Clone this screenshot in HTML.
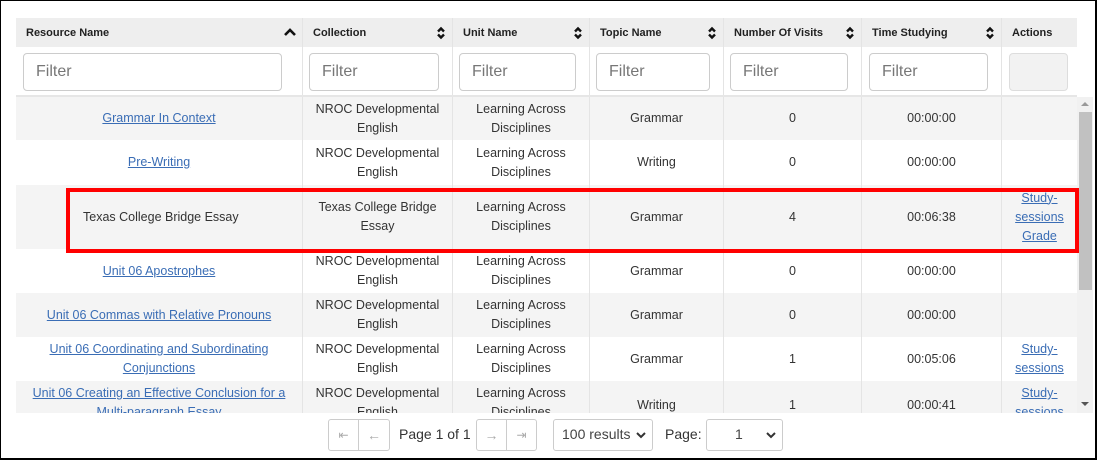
<!DOCTYPE html>
<html><head><style>
*{box-sizing:border-box;margin:0;padding:0}
body{width:1097px;height:460px;background:#fff;font-family:"Liberation Sans",sans-serif;color:#333;position:relative;overflow:hidden}
.frame{position:absolute;left:0;top:0;width:1097px;height:460px;border:1px solid #000;border-right:2px solid #000;border-bottom:2px solid #000}
.hdr{position:absolute;left:16px;top:18px;width:1061px;height:29px;background:#eee;display:flex}
.fil{position:absolute;left:16px;top:47px;width:1061px;height:50px;display:flex;border-bottom:2px solid #e6e6e6}
.c{position:relative;border-right:1px solid #e4e4e4}
.c:last-child{border-right:none}
.hdr .c{font-weight:bold;font-size:11px;color:#222;padding:9px 0 0 10px}
.sort{position:absolute;right:6px;top:8px}
.fil input{position:absolute;top:6px;left:6px;right:13px;height:38px;border:1px solid #ccc;border-radius:4px;font:16px "Liberation Sans",sans-serif;color:#777;padding-left:12px;background:#fff}
.body{position:absolute;left:16px;top:97px;width:1061px;height:316px;overflow:hidden}
.row{display:flex;font-size:12.5px;line-height:19px}
.row .c{display:flex;align-items:center;justify-content:center;text-align:center}
.g{background:#f4f4f4}
a{color:#3a6db5;text-decoration:underline}
.w1{width:287px}.w2{width:150px}.w3{width:137px}.w4{width:134px}.w5{width:138px}.w6{width:140px}.w7{width:75px}
.sb{position:absolute;left:1077px;top:97px;width:16px;height:316px;background:#f1f1f1}
.thumb{position:absolute;left:1079px;top:112px;width:13px;height:178px;background:#c1c1c1}
.red{position:absolute;left:66px;top:188px;width:1013px;height:65px;border:4px solid #f00}
.pag{position:absolute;top:419px;height:32px;border:1px solid #ccc;border-radius:3px;background:#fff;font-size:14px;color:#aaa}
</style></head><body>
<div class="frame"></div>
<div class="hdr">
<div class="c w1">Resource Name<svg class="sort" width="12" height="12" viewBox="0 0 12 12"><path d="M1 9 L6 4 L11 9" stroke="#111" stroke-width="2.6" fill="none"/></svg></div>
<div class="c w2">Collection<svg class="sort" width="10" height="14" viewBox="0 0 10 14"><path d="M2 5.5 L5 2.5 L8 5.5M2 8.5 L5 11.5 L8 8.5" stroke="#111" stroke-width="2.4" fill="none"/></svg></div>
<div class="c w3">Unit Name<svg class="sort" width="10" height="14" viewBox="0 0 10 14"><path d="M2 5.5 L5 2.5 L8 5.5M2 8.5 L5 11.5 L8 8.5" stroke="#111" stroke-width="2.4" fill="none"/></svg></div>
<div class="c w4">Topic Name<svg class="sort" width="10" height="14" viewBox="0 0 10 14"><path d="M2 5.5 L5 2.5 L8 5.5M2 8.5 L5 11.5 L8 8.5" stroke="#111" stroke-width="2.4" fill="none"/></svg></div>
<div class="c w5">Number Of Visits<svg class="sort" width="10" height="14" viewBox="0 0 10 14"><path d="M2 5.5 L5 2.5 L8 5.5M2 8.5 L5 11.5 L8 8.5" stroke="#111" stroke-width="2.4" fill="none"/></svg></div>
<div class="c w6">Time Studying<svg class="sort" width="10" height="14" viewBox="0 0 10 14"><path d="M2 5.5 L5 2.5 L8 5.5M2 8.5 L5 11.5 L8 8.5" stroke="#111" stroke-width="2.4" fill="none"/></svg></div>
<div class="c w7">Actions</div>
</div>
<div class="fil">
<div class="c w1"><input value="Filter" style="left:7px;right:20px"></div>
<div class="c w2"><input value="Filter"></div>
<div class="c w3"><input value="Filter"></div>
<div class="c w4"><input value="Filter"></div>
<div class="c w5"><input value="Filter"></div>
<div class="c w6"><input value="Filter" style="left:7px"></div>
<div class="c w7"><input value="" style="left:7px;right:9px;background:#f2f2f2;border-color:#ddd"></div>
</div>
<div class="body">
<div class="row g" style="height:43px"><div class="c w1"><a>Grammar In Context</a></div><div class="c w2">NROC Developmental<br>English</div><div class="c w3">Learning Across<br>Disciplines</div><div class="c w4">Grammar</div><div class="c w5">0</div><div class="c w6">00:00:00</div><div class="c w7"></div></div>
<div class="row" style="height:45px"><div class="c w1"><a>Pre-Writing</a></div><div class="c w2">NROC Developmental<br>English</div><div class="c w3">Learning Across<br>Disciplines</div><div class="c w4">Writing</div><div class="c w5">0</div><div class="c w6">00:00:00</div><div class="c w7"></div></div>
<div class="row g" style="height:64px"><div class="c w1" style="justify-content:flex-start;padding-left:67px">Texas College Bridge Essay</div><div class="c w2">Texas College Bridge<br>Essay</div><div class="c w3">Learning Across<br>Disciplines</div><div class="c w4">Grammar</div><div class="c w5">4</div><div class="c w6">00:06:38</div><div class="c w7"><a>Study-<br>sessions<br>Grade</a></div></div>
<div class="row" style="height:44px"><div class="c w1"><a>Unit 06 Apostrophes</a></div><div class="c w2">NROC Developmental<br>English</div><div class="c w3">Learning Across<br>Disciplines</div><div class="c w4">Grammar</div><div class="c w5">0</div><div class="c w6">00:00:00</div><div class="c w7"></div></div>
<div class="row g" style="height:44px"><div class="c w1"><a>Unit 06 Commas with Relative Pronouns</a></div><div class="c w2">NROC Developmental<br>English</div><div class="c w3">Learning Across<br>Disciplines</div><div class="c w4">Grammar</div><div class="c w5">0</div><div class="c w6">00:00:00</div><div class="c w7"></div></div>
<div class="row" style="height:44px"><div class="c w1"><a>Unit 06 Coordinating and Subordinating<br>Conjunctions</a></div><div class="c w2">NROC Developmental<br>English</div><div class="c w3">Learning Across<br>Disciplines</div><div class="c w4">Grammar</div><div class="c w5">1</div><div class="c w6">00:05:06</div><div class="c w7"><a>Study-<br>sessions</a></div></div>
<div class="row g" style="height:44px"><div class="c w1"><a>Unit 06 Creating an Effective Conclusion for a<br>Multi-paragraph Essay</a></div><div class="c w2">NROC Developmental<br>English</div><div class="c w3">Learning Across<br>Disciplines</div><div class="c w4" style="padding-top:4px">Writing</div><div class="c w5" style="padding-top:4px">1</div><div class="c w6" style="padding-top:4px">00:00:41</div><div class="c w7"><a>Study-<br>sessions</a></div></div>
</div>
<div class="sb"></div><div class="thumb"></div>
<svg style="position:absolute;left:1081px;top:101px" width="8" height="6"><path d="M0 5 L4 1 L8 5Z" fill="#999"/></svg>
<svg style="position:absolute;left:1081px;top:401px" width="8" height="6"><path d="M0 1 L4 5 L8 1Z" fill="#555"/></svg>
<div class="red"></div>
<div class="pag" style="left:328px;width:62px;display:flex"><div style="width:31px;border-right:1px solid #ccc;text-align:center;line-height:30px;font-size:12px">⇤</div><div style="width:31px;text-align:center;line-height:30px">←</div></div>
<div style="position:absolute;left:399px;top:426px;font-size:14px;color:#333">Page 1 of 1</div>
<div class="pag" style="left:476px;width:61px;display:flex"><div style="width:31px;border-right:1px solid #ccc;text-align:center;line-height:30px">→</div><div style="width:30px;text-align:center;line-height:30px;font-size:12px">⇥</div></div>
<div class="pag" style="left:553px;width:100px;color:#444;padding:6px 0 0 8px">100 results<svg style="position:absolute;right:6px;top:12px" width="10" height="7"><path d="M1 1 L5 5 L9 1" stroke="#333" stroke-width="2" fill="none"/></svg></div>
<div style="position:absolute;left:665px;top:426px;font-size:14px;color:#333">Page:</div>
<div class="pag" style="left:706px;width:77px;color:#444;padding:6px 0 0 28px">1<svg style="position:absolute;right:6px;top:12px" width="10" height="7"><path d="M1 1 L5 5 L9 1" stroke="#333" stroke-width="2" fill="none"/></svg></div>
</body></html>
